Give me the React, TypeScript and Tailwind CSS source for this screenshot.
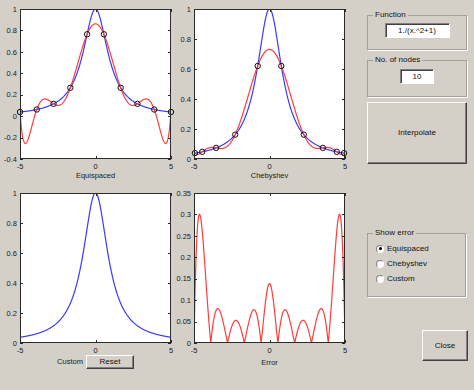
import { useId } from 'react'

const f = (x: number) => 1 / (x * x + 1)

function linspace(a: number, b: number, n: number) {
  return Array.from({ length: n }, (_, i) => a + ((b - a) * i) / (n - 1))
}

// lagrange interpolant through the nodes
function interpolant(nodes: number[]) {
  const ys = nodes.map(f)
  return (x: number) => {
    let s = 0
    for (let i = 0; i < nodes.length; i++) {
      let l = 1
      for (let j = 0; j < nodes.length; j++) {
        if (j !== i) l *= (x - nodes[j]) / (nodes[i] - nodes[j])
      }
      s += ys[i] * l
    }
    return s
  }
}

const equiNodes = linspace(-5, 5, 10)
const chebNodes = Array.from({ length: 10 }, (_, k) => -5 * Math.cos(((2 * k + 1) * Math.PI) / 20))
const pEqui = interpolant(equiNodes)
const pCheb = interpolant(chebNodes)
const errEqui = (x: number) => Math.abs(f(x) - pEqui(x))

const BLUE = '#3a3aff'
const RED = '#ff3c3c'

interface Line {
  fn: (x: number) => number
  color: string
}

interface PlotProps {
  ymin: number
  ymax: number
  step: number
  lines: Line[]
  marks?: number[]
}

function Plot({ ymin, ymax, step, lines, marks }: PlotProps) {
  const clip = useId()
  const L = 20
  const T = 9
  const W = 151
  const H = 150
  const sx = (x: number) => L + ((x + 5) / 10) * W
  const sy = (y: number) => T + ((ymax - y) / (ymax - ymin)) * H

  const yticks: number[] = []
  for (let v = ymin; v <= ymax + 1e-9; v += step) yticks.push(+v.toFixed(3))
  const xticks = [-5, 0, 5]

  const path = (fn: (x: number) => number) => {
    const pts = linspace(-5, 5, 500)
    return pts.map((x, i) => `${i ? 'L' : 'M'}${sx(x).toFixed(2)},${sy(fn(x)).toFixed(2)}`).join('')
  }

  return (
    <svg width={174} height={171} className="block overflow-visible" style={{ fontFamily: '"Liberation Sans", Arial, sans-serif' }}>
      <defs>
        <clipPath id={clip}>
          <rect x={L} y={T} width={W} height={H} />
        </clipPath>
      </defs>
      <rect x={L} y={T} width={W} height={H} fill="#fff" />
      <g clipPath={`url(#${clip})`}>
        {lines.map((l, i) => (
          <path key={i} d={path(l.fn)} fill="none" stroke={l.color} strokeWidth={1.2} />
        ))}
      </g>
      {marks?.map((x, i) => (
        <circle key={i} cx={sx(x)} cy={sy(f(x))} r={2.7} fill="none" stroke="#111" strokeWidth={1} />
      ))}
      <rect x={L + 0.5} y={T + 0.5} width={W - 1} height={H - 1} fill="none" stroke="#2a2a2a" />
      {yticks.map((t) => {
        const y = Math.round(sy(t)) + 0.5
        return (
          <g key={t}>
            <line x1={L} x2={L + 3} y1={y} y2={y} stroke="#2a2a2a" />
            <line x1={L + W - 3} x2={L + W} y1={y} y2={y} stroke="#2a2a2a" />
            <text x={L - 3} y={sy(t) + 2.7} textAnchor="end" fontSize={7.5} fill="#1a1a1a">
              {String(t)}
            </text>
          </g>
        )
      })}
      {xticks.map((t) => {
        const x = Math.round(sx(t)) + 0.5
        return (
          <g key={t}>
            <line x1={x} x2={x} y1={T} y2={T + 3} stroke="#2a2a2a" />
            <line x1={x} x2={x} y1={T + H - 3} y2={T + H} stroke="#2a2a2a" />
            <text x={sx(t)} y={T + H + 10} textAnchor="middle" fontSize={7.5} fill="#1a1a1a">
              {String(t)}
            </text>
          </g>
        )
      })}
    </svg>
  )
}

const btn =
  'bg-[#d4d0c8] border border-t-white border-l-white border-r-[#404040] border-b-[#404040] shadow-[inset_-1px_-1px_0_#808080] text-[8px] text-[#111] flex items-center justify-center'
const field =
  'h-[15px] bg-white border border-t-[#808080] border-l-[#808080] border-r-white border-b-white shadow-[inset_1px_1px_0_#404040] text-[8px] text-[#111] flex items-center justify-center'
const frame = 'border border-[#a3a09a] shadow-[1px_1px_0_#fff]'
const legend = 'ml-[5px] px-[2px] text-[8px] leading-[10px] text-[#111]'

function Radio({ label, checked }: { label: string; checked?: boolean }) {
  return (
    <div className="h-[15px] flex items-center pl-[8px] gap-[3px]">
      <div className="w-[8px] h-[8px] rounded-full bg-white border border-t-[#808080] border-l-[#808080] border-r-white border-b-white flex items-center justify-center">
        {checked && <div className="w-[3px] h-[3px] rounded-full bg-black" />}
      </div>
      <span className="text-[8px] text-[#111]">{label}</span>
    </div>
  )
}

export default function App() {
  return (
    <div
      className="w-[474px] h-[390px] bg-[#d4d0c8] flex overflow-hidden"
      style={{ fontFamily: '"Liberation Sans", Arial, sans-serif' }}
    >
      <div className="grid grid-cols-[174px_174px] grid-rows-[184px_184px]">
        <div>
          <Plot
            ymin={-0.4}
            ymax={1}
            step={0.2}
            lines={[
              { fn: f, color: BLUE },
              { fn: pEqui, color: RED },
            ]}
            marks={equiNodes}
          />
          <div className="ml-[20px] w-[151px] text-center text-[7.5px] leading-[9px] text-[#1a1a1a]">Equispaced</div>
        </div>
        <div>
          <Plot
            ymin={0}
            ymax={1}
            step={0.2}
            lines={[
              { fn: f, color: BLUE },
              { fn: pCheb, color: RED },
            ]}
            marks={chebNodes}
          />
          <div className="ml-[20px] w-[151px] text-center text-[7.5px] leading-[9px] text-[#1a1a1a]">Chebyshev</div>
        </div>
        <div>
          <Plot ymin={0} ymax={1} step={0.2} lines={[{ fn: f, color: BLUE }]} />
          <div className="ml-[20px] w-[151px] flex items-center justify-center gap-[3px]">
            <span className="text-[7.5px] text-[#1a1a1a]">Custom</span>
            <div className={`${btn} w-[48px] h-[14px]`}>Reset</div>
          </div>
        </div>
        <div>
          <Plot ymin={0} ymax={0.35} step={0.05} lines={[{ fn: errEqui, color: RED }]} />
          <div className="mt-[3px] ml-[20px] w-[151px] text-center text-[7.5px] leading-[9px] text-[#1a1a1a]">Error</div>
        </div>
      </div>

      <div className="ml-[19px] w-[100px] flex flex-col">
        <fieldset className={`mt-[10px] ${frame} pt-[3px] pb-[11px]`}>
          <legend className={legend}>Function</legend>
          <div className="flex justify-center">
            <div className={`${field} w-[65px]`}>1./(x.^2+1)</div>
          </div>
        </fieldset>
        <fieldset className={`mt-[5px] ${frame} pt-[4px] pb-[12px]`}>
          <legend className={legend}>No. of nodes</legend>
          <div className="flex justify-center">
            <div className={`${field} w-[34px]`}>10</div>
          </div>
        </fieldset>
        <div className={`${btn} mt-[5px] h-[62px]`}>Interpolate</div>
        <fieldset className={`mt-[64px] w-[99px] ${frame} pt-[3px] pb-[10px]`}>
          <legend className={legend}>Show error</legend>
          <Radio label="Equispaced" checked />
          <Radio label="Chebyshev" />
          <Radio label="Custom" />
        </fieldset>
        <div className={`${btn} mt-[33px] ml-[55px] w-[46px] h-[31px]`}>Close</div>
      </div>
    </div>
  )
}
